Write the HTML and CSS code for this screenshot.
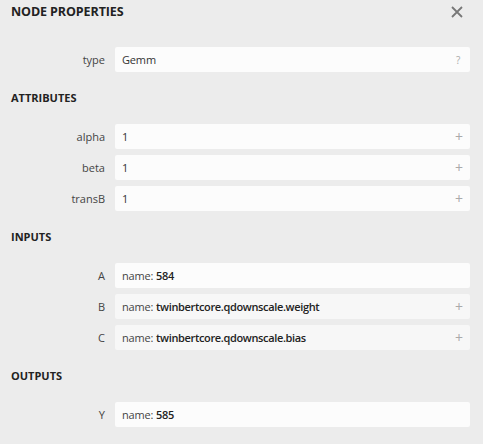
FILE: index.html
```html
<!DOCTYPE html>
<html>
<head>
<meta charset="utf-8">
<link rel="stylesheet" href="styles.css">
</head>
<body>
<div class="sidebar">
  <div class="header">
    <div class="title">NODE PROPERTIES</div>
    <svg class="close" width="14" height="14" viewBox="0 0 14 14"><path d="M2 2 L12 12 M12 2 L2 12" stroke="#777" stroke-width="1.8" fill="none"/></svg>
  </div>
  <div class="section first">
    <div class="row"><div class="label">type</div><div class="value"><span>Gemm</span><span class="icon q">?</span></div></div>
  </div>
  <div class="section">
    <div class="section-title">ATTRIBUTES</div>
    <div class="row"><div class="label">alpha</div><div class="value"><span>1</span><span class="icon">+</span></div></div>
    <div class="row"><div class="label">beta</div><div class="value"><span>1</span><span class="icon">+</span></div></div>
    <div class="row"><div class="label">transB</div><div class="value"><span>1</span><span class="icon">+</span></div></div>
  </div>
  <div class="section">
    <div class="section-title">INPUTS</div>
    <div class="row"><div class="label">A</div><div class="value"><span><span class="key">name: </span><b>584</b></span></div></div>
    <div class="row"><div class="label">B</div><div class="value dark"><span><span class="key">name: </span><b>twinbertcore.qdownscale.weight</b></span><span class="icon">+</span></div></div>
    <div class="row"><div class="label">C</div><div class="value dark"><span><span class="key">name: </span><b>twinbertcore.qdownscale.bias</b></span><span class="icon">+</span></div></div>
  </div>
  <div class="section">
    <div class="section-title">OUTPUTS</div>
    <div class="row"><div class="label">Y</div><div class="value"><span><span class="key">name: </span><b>585</b></span></div></div>
  </div>
</div>
</body>
</html>
```
FILE: styles.css
```css
html, body {
  margin: 0;
  padding: 0;
  background: #ececec;
}
body {
  font-family: "Open Sans", "Noto Sans", sans-serif;
  color: #333;
  width: 483px;
  height: 444px;
  overflow: hidden;
}
.sidebar {
  display: flex;
  flex-direction: column;
}
.header {
  height: 28px;
  display: flex;
  justify-content: space-between;
  align-items: flex-start;
  padding: 0 13px 0 11px;
}
.title {
  font-size: 12.5px;
  font-weight: 700;
  line-height: 24px;
  color: #222;
  letter-spacing: -0.1px;
}
.close {
  margin-top: 5px;
  margin-right: 6px;
}
.section {
  display: flex;
  flex-direction: column;
  gap: 6px;
  padding-right: 13px;
}
.section.first {
  margin-top: 19px;
}
.section-title {
  font-size: 11px;
  font-weight: 700;
  line-height: 14px;
  color: #222;
  padding-left: 11px;
  margin: 19px 0 13px;
}
.row {
  display: grid;
  grid-template-columns: 105px 1fr;
  column-gap: 10px;
  align-items: center;
}
.label {
  text-align: right;
  font-size: 11px;
  color: #444;
}
.value {
  height: 25px;
  background: #fcfcfc;
  border-radius: 2px;
  display: flex;
  align-items: center;
  justify-content: space-between;
  padding: 0 6px 0 7px;
  font-size: 11px;
  color: #333;
  letter-spacing: -0.15px;
}
.value.dark {
  background: #f7f7f7;
}
.value b {
  font-weight: 600;
  color: #222;
  letter-spacing: -0.35px;
}
.key {
  color: #444;
}
.icon {
  color: #aaa;
  font-size: 14px;
  line-height: 14px;
  width: 10px;
  text-align: center;
}
.icon.q {
  font-size: 10px;
  margin-right: 1px;
}
```
